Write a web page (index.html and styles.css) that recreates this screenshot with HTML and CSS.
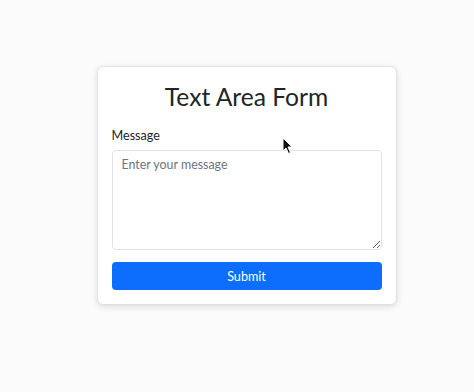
FILE: index.html
```html
<!DOCTYPE html>
<html lang="en">
<head>
<meta charset="utf-8">
<title>Text Area Form</title>
<link rel="stylesheet" href="styles.css">
</head>
<body>
<main class="page">
  <form class="card">
    <h2 class="title">Text Area Form</h2>
    <label class="label" for="msg">Message</label>
    <textarea id="msg" class="input" placeholder="Enter your message"></textarea>
    <button type="button" class="btn">Submit</button>
  </form>
</main>
<svg class="cursor" width="12" height="18" viewBox="0 0 12 18"><path d="M1 1 L1 14 L4 11 L6.5 16.5 L8.5 15.5 L6 10 L10 10 Z" fill="#111" stroke="#fff" stroke-width="1"/></svg>
</body>
</html>
```
FILE: styles.css
```css
* { box-sizing: border-box; }
html, body { margin: 0; padding: 0; }
body {
  background: #fbfbfb;
  font-family: Lato, "Noto Sans", sans-serif;
  color: #212529;
  width: 474px;
  height: 392px;
  position: relative;
  overflow: hidden;
}
.page {
  display: flex;
  justify-content: center;
  padding-top: 66px;
  padding-left: 19px;
}
.card {
  width: 300px;
  background: #fff;
  border: 1px solid #dee2e6;
  border-radius: 6px;
  box-shadow: 0 2px 6px rgba(0,0,0,0.12);
  padding: 15px 14px 14px 14px;
  display: flex;
  flex-direction: column;
}
.title {
  margin: 0 0 17px;
  font-weight: 400;
  font-size: 24.6px;
  line-height: 29px;
  text-align: center;
  color: #212529;
}
.label {
  font-size: 12.6px;
  line-height: 16px;
  margin-bottom: 6px;
  color: #212529;
}
.input {
  height: 100px;
  border: 1px solid #dee2e6;
  border-radius: 4px;
  padding: 5px 9px;
  font-family: inherit;
  font-size: 12.4px;
  line-height: 18px;
  color: #212529;
  resize: vertical;
  margin-bottom: 12px;
}
.input::placeholder { color: #6c757d; }
.btn {
  height: 28px;
  border: 0;
  border-radius: 4px;
  background: #0d6efd;
  color: #fff;
  font-family: inherit;
  font-size: 12.6px;
}
.cursor {
  position: absolute;
  left: 282px;
  top: 137px;
}
```
